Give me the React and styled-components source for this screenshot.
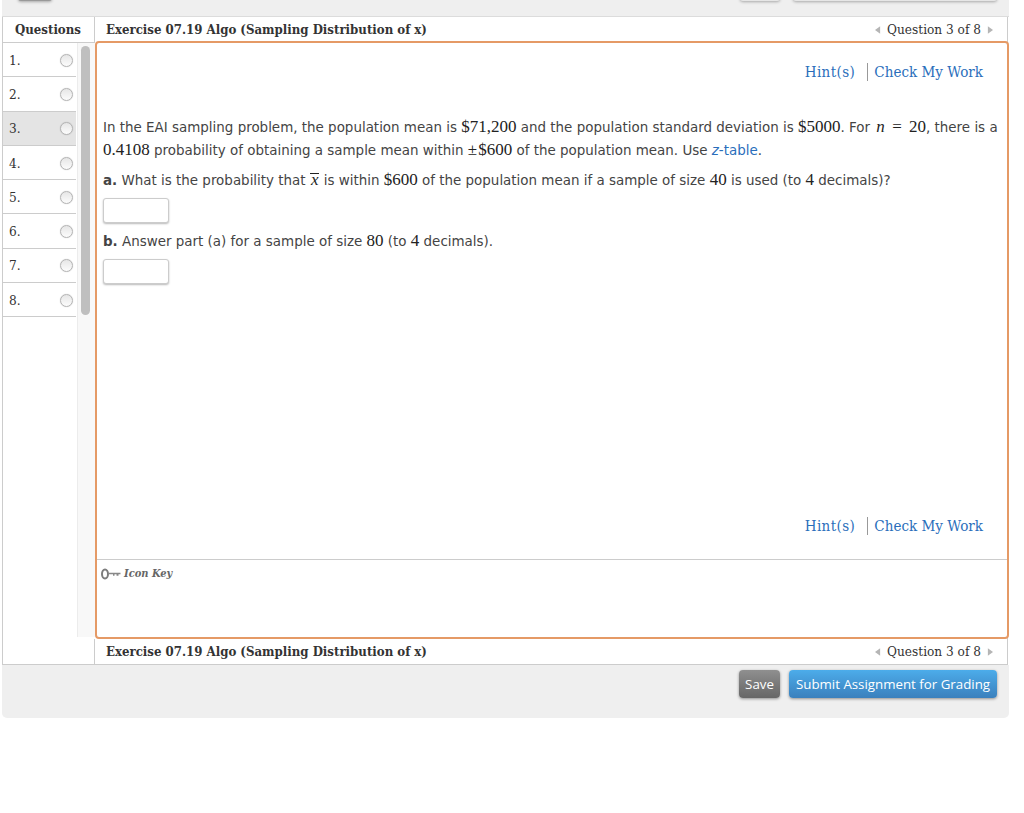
import React from "react";
import styled, { createGlobalStyle } from "styled-components";

const Global = createGlobalStyle`
  html, body { margin: 0; padding: 0; background: #fff; }
  body { font-family: "DejaVu Sans", sans-serif; color: #333; }
`;
const serif = `"DejaVu Serif Condensed", "Liberation Serif", serif`;
const mathFont = `"Liberation Serif", serif`;

const Page = styled.div`
  width: 1007px;
  margin-left: 2px;
`;
const TopBar = styled.div`
  height: 16px;
  background: #efefef;
  position: relative;
  border-bottom: 1px solid #dcdcdc;
`;
const CutButton = styled.div`
  position: absolute;
  top: -6px;
  height: 7px;
  left: ${p => p.$x}px;
  width: ${p => p.$w}px;
  border-radius: 3px;
  background: ${p => p.$bg};
  box-shadow: 0 1px 3px rgba(0,0,0,.3);
`;
const Frame = styled.div`
  border-left: 1px solid #ccc;
  border-right: 1px solid #ccc;
  margin-right: 1px;
`;
const TitleRow = styled.div`
  display: flex;
  height: 25px;
  background: #fff;
  border-bottom: ${p => (p.$bottom ? "1px solid #ccc" : "0")};
`;
const TitleLeft = styled.div`
  width: 92px;
  flex: none;
  border-right: 1px solid #ccc;
  font: bold 13.1px ${serif};
  color: #333;
  display: flex;
  align-items: center;
  padding-left: 12px;
  box-sizing: border-box;
`;
const TitleMain = styled.div`
  flex: 1;
  display: flex;
  align-items: center;
  justify-content: space-between;
  padding: 0 14px 0 11px;
  font: bold 13.1px ${serif};
  color: #333;
`;
const Pager = styled.div`
  display: flex;
  align-items: center;
  gap: 6px;
  font: 13.5px ${serif};
  color: #333;
  padding-bottom: 2px;
`;
const Tri = styled.svg`
  width: 6px;
  height: 8px;
  fill: #b5b5b5;
  margin-top: 2px;
`;
const Body = styled.div`
  display: flex;
  height: 597px;
`;
const Sidebar = styled.div`
  width: 92px;
  flex: none;
  display: flex;
  border-top: 1px solid #ccc;
  box-sizing: border-box;
`;
const RowList = styled.div`
  width: 73px;
  flex: none;
`;
const QRow = styled.div`
  height: 34.3px;
  box-sizing: border-box;
  border-bottom: 1px solid #ccc;
  display: flex;
  align-items: center;
  justify-content: space-between;
  padding: 0 3px 0 6px;
  background: ${p => (p.$active ? "#e4e4e4" : "#fff")};
  font: 13.5px ${serif};
  color: #333;
`;
const Radio = styled.span`
  width: 11px;
  height: 11px;
  border-radius: 50%;
  border: 1px solid #b4b4b4;
  background: linear-gradient(#e6e6e6, #fcfcfc);
  box-shadow: 0 0 1px rgba(0,0,0,.25);
  margin-top: 1px;
`;
const ScrollTrack = styled.div`
  flex: 1;
  margin-left: 1px;
  background: #f8f8f8;
  border-left: 1px solid #ececec;
  padding: 3px 0 0 3px;
  margin-bottom: 2px;
`;
const ScrollThumb = styled.div`
  width: 9px;
  height: 269px;
  border-radius: 5px;
  background: #bfbfbf;
`;
const Panel = styled.div`
  flex: 1;
  margin: -1px -2px 0 0;
  border: 2px solid #e59a66;
  border-radius: 4px;
  box-sizing: border-box;
  display: flex;
  flex-direction: column;
  background: #fff;
  min-width: 0;
  position: relative;
`;
const HintRow = styled.div`
  display: flex;
  justify-content: flex-end;
  align-items: center;
  padding-right: 24px;
  font: 15.05px ${serif};
  color: #2a6ebb;
  height: 20px;
  margin-top: ${p => p.$top}px;
`;
const HintLabel = styled.span`
  letter-spacing: 0.4px;
`;
const Sep = styled.span`
  width: 1px;
  height: 18px;
  background: #999;
  margin: 0 6px 0 12px;
`;
const Content = styled.div`
  flex: 1;
  padding: 0 6px;
  font-size: 13.45px;
  color: #444;
  margin-top: 33px;
`;
const Para = styled.p`
  margin: ${p => p.$mt || 0}px 0 0;
  line-height: 23px;
  height: 23px;
  white-space: nowrap;
`;
const M = styled.span`
  font-family: ${mathFont};
  font-size: 17px;
  color: #222;
`;
const MI = styled(M)`
  font-style: italic;
  margin-left: 2px;
`;
const Rel = styled(M)`
  margin: 0 3px;
`;
const PlusMinus = styled(M)`
  margin-right: 1px;
`;
const XBar = styled(M)`
  font-style: italic;
  display: inline-block;
  position: relative;
  line-height: 1;
  padding: 0 1px;
  &::before {
    content: "";
    position: absolute;
    left: 0;
    right: 0;
    top: 2px;
    height: 1px;
    background: #222;
  }
`;
const Link = styled.span`
  color: #2a6ebb;
`;
const Input = styled.div`
  width: 64px;
  height: 23px;
  margin-top: ${p => p.$mt}px;
  border: 1px solid #ccc;
  border-radius: 3px;
  box-shadow: 0 1px 2px rgba(0,0,0,.28);
  background: #fff;
`;
const KeyArea = styled.div`
  height: 70px;
  border-top: 1px solid #ccc;
  margin-top: 23px;
  flex: none;
  padding: 7px 0 0 4px;
  display: flex;
  align-items: flex-start;
  gap: 3px;
  font: italic bold 11px ${serif};
  color: #666;
`;
const KeyIcon = styled.svg`
  margin-top: 1px;
  width: 20px;
  height: 12px;
`;
const BottomBar = styled.div`
  height: 53px;
  background: #efefef;
  border-radius: 0 0 5px 5px;
  display: flex;
  justify-content: flex-end;
  align-items: flex-start;
  gap: 9px;
  padding: 5px 12px 0 0;
  box-sizing: border-box;
`;
const Btn = styled.div`
  height: 28px;
  box-sizing: border-box;
  border-radius: 4px;
  color: #fff;
  font-size: 13.3px;
  font-family: "Open Sans", sans-serif;
  display: flex;
  align-items: center;
  justify-content: center;
  width: ${p => p.$w}px;
  background: ${p => (p.$blue ? "linear-gradient(#4cacea, #3a80bd)" : "linear-gradient(#8f8f8f, #666)")};
  box-shadow: 0 1px 3px rgba(0,0,0,.4);
`;

const Left = () => <Tri viewBox="0 0 7 9"><path d="M6 0v9L0 4.5z" /></Tri>;
const Right = () => <Tri viewBox="0 0 7 9"><path d="M1 0v9l6-4.5z" /></Tri>;
const PagerBlock = () => (
  <Pager><Left />Question 3 of 8<Right /></Pager>
);
const title = "Exercise 07.19 Algo (Sampling Distribution of x)";
const Hints = ({ top }) => (
  <HintRow $top={top}><HintLabel>Hint(s)</HintLabel><Sep />Check My Work</HintRow>
);

export default function App() {
  return (
    <Page>
      <Global />
      <TopBar>
        <CutButton $x={16} $w={34} $bg="#999" />
        <CutButton $x={738} $w={40} $bg="#e6e6e6" />
        <CutButton $x={791} $w={204} $bg="#e6e6e6" />
      </TopBar>
      <Frame>
        <TitleRow>
          <TitleLeft>Questions</TitleLeft>
          <TitleMain>{title}<PagerBlock /></TitleMain>
        </TitleRow>
        <Body>
          <Sidebar>
            <RowList>
              {[1, 2, 3, 4, 5, 6, 7, 8].map(n => (
                <QRow key={n} $active={n === 3}>{n}.<Radio /></QRow>
              ))}
            </RowList>
            <ScrollTrack><ScrollThumb /></ScrollTrack>
          </Sidebar>
          <Panel>
            <Hints top={19} />
            <Content>
              <Para>
                In the EAI sampling problem, the population mean is <M>$71,200</M> and the population standard deviation is <M>$5000</M>. For <MI>n</MI> <Rel>=</Rel> <M>20</M>, there is a
              </Para>
              <Para>
                <M>0.4108</M> probability of obtaining a sample mean within <PlusMinus>±</PlusMinus><M>$600</M> of the population mean. Use <Link><i>z</i>-table</Link>.
              </Para>
              <Para $mt={7}>
                <b>a.</b> What is the probability that <XBar>x</XBar> is within <M>$600</M> of the population mean if a sample of size <M>40</M> is used (to <M>4</M> decimals)?
              </Para>
              <Input $mt={7} />
              <Para $mt={6}>
                <b>b.</b> Answer part (a) for a sample of size <M>80</M> (to <M>4</M> decimals).
              </Para>
              <Input $mt={7} />
            </Content>
            <Hints top={0} />
            <KeyArea>
              <KeyIcon viewBox="0 0 20 12">
                <ellipse cx="4" cy="6" rx="3" ry="4.6" fill="none" stroke="#7d7d7d" strokeWidth="2" />
                <path d="M7.5 4.7h12v1.5h-2v1.6h-2V6.2h-2v1.6H12V6.2H7.5z" fill="#888" />
              </KeyIcon>
              Icon Key
            </KeyArea>
          </Panel>
        </Body>
        <TitleRow $bottom>
          <TitleLeft />
          <TitleMain>{title}<PagerBlock /></TitleMain>
        </TitleRow>
      </Frame>
      <BottomBar>
        <Btn $w={41}>Save</Btn>
        <Btn $blue $w={208}>Submit Assignment for Grading</Btn>
      </BottomBar>
    </Page>
  );
}
